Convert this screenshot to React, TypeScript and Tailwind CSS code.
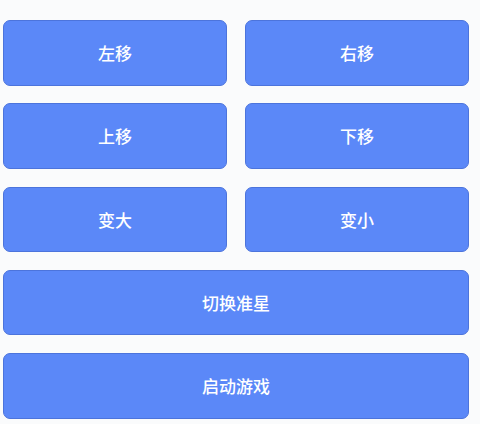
import React from "react";

const pairs: [string, string][] = [
  ["左移", "右移"],
  ["上移", "下移"],
  ["变大", "变小"],
];

const wide = ["切换准星", "启动游戏"];

function Btn({ label, className = "" }: { label: string; className?: string }) {
  return (
    <button
      type="button"
      className={`h-[65.5px] rounded-[7px] border border-[#4c74dc] bg-[#5b88f8] text-[17px] font-medium text-white ${className}`}
    >
      {label}
    </button>
  );
}

export default function App() {
  return (
    <div
      className="h-[424px] w-[480px] bg-[#fafbfc] pl-[3px] pr-[11px] pt-[20px]"
      style={{ fontFamily: '"Noto Sans CJK SC", "Noto Sans", sans-serif' }}
    >
      <div className="flex flex-col gap-[17.75px]">
        {pairs.map(([a, b]) => (
          <div key={a} className="grid grid-cols-2 gap-[18px]">
            <Btn label={a} />
            <Btn label={b} />
          </div>
        ))}
        {wide.map((w) => (
          <Btn key={w} label={w} className="w-full" />
        ))}
      </div>
    </div>
  );
}
